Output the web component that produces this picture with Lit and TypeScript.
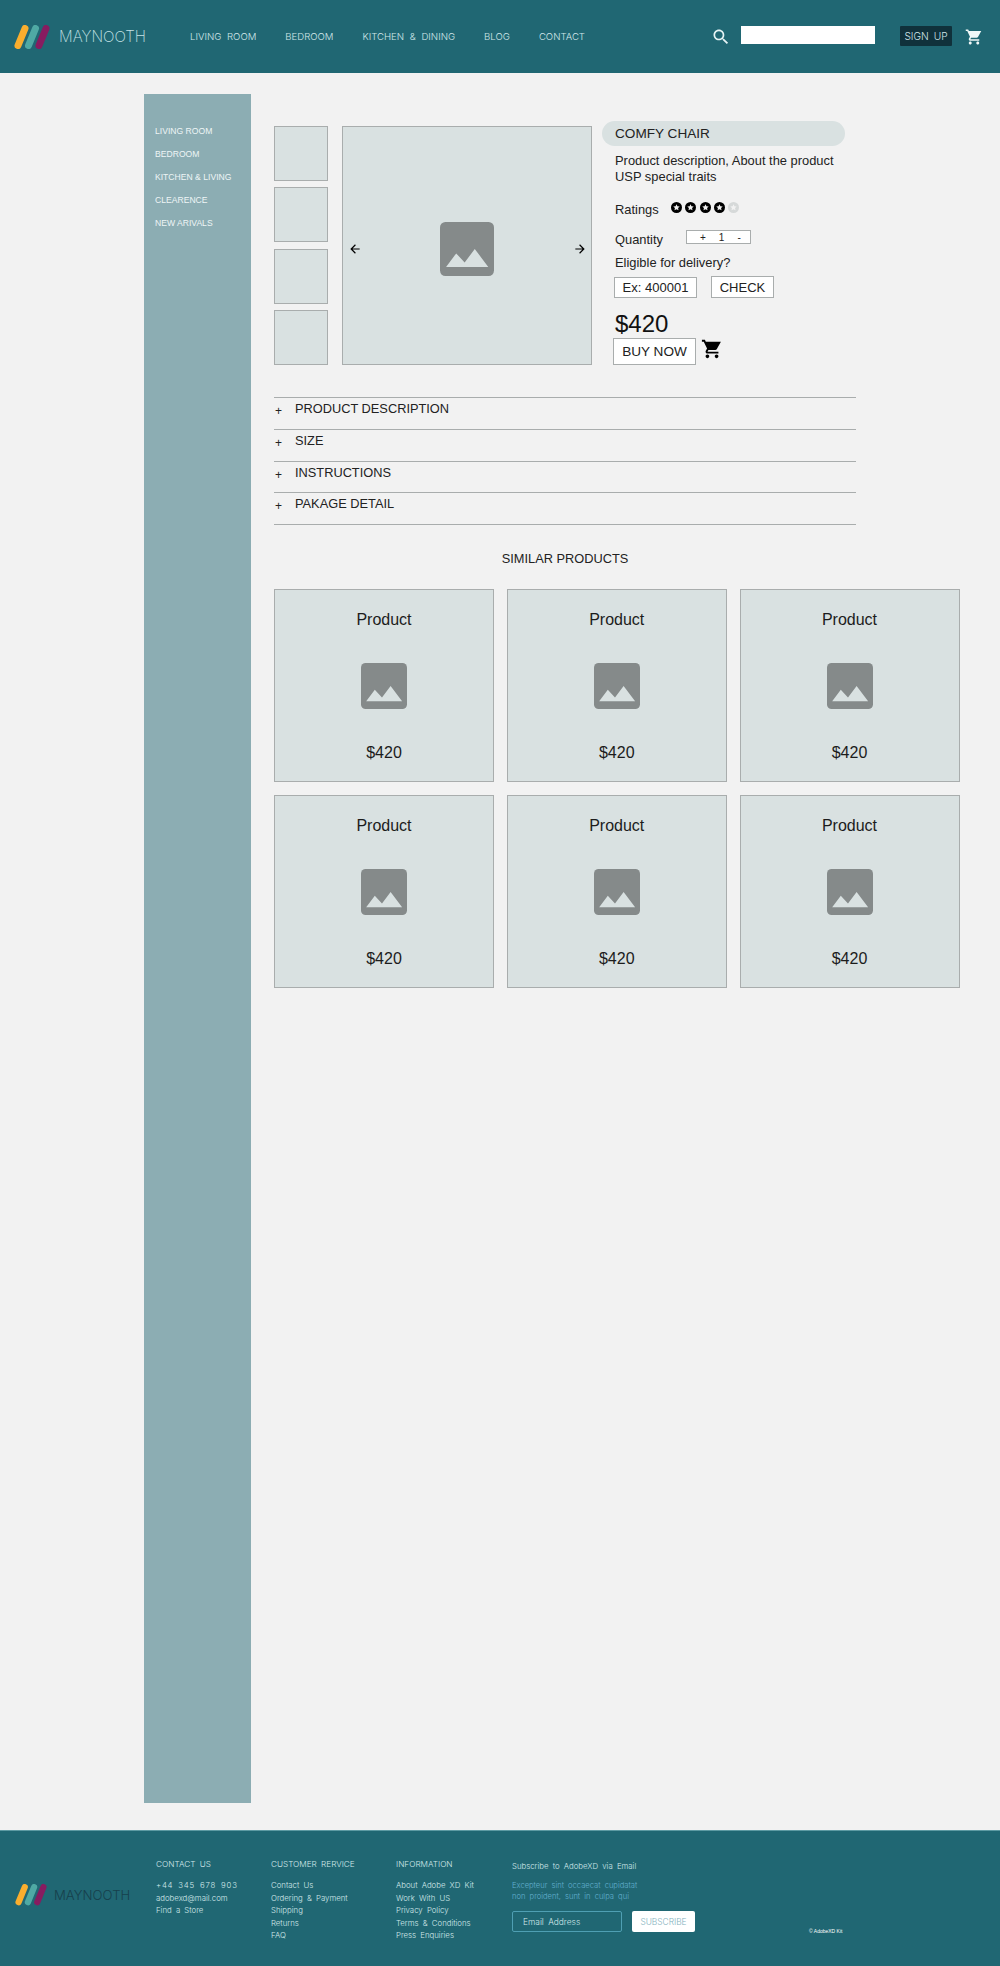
import { LitElement, html, css, svg } from "lit";
import { customElement } from "lit/decorators.js";

const CART = "M7 18c-1.1 0-1.99.9-1.99 2S5.9 22 7 22s2-.9 2-2-.9-2-2-2zM1 2v2h2l3.6 7.59-1.35 2.45c-.16.28-.25.61-.25.96 0 1.1.9 2 2 2h12v-2H7.42c-.14 0-.25-.11-.25-.25l.03-.12.9-1.63h7.45c.75 0 1.41-.41 1.75-1.03L21.7 4H5.21l-.94-2H1zm16 16c-1.1 0-1.99.9-1.99 2s.89 2 1.99 2 2-.9 2-2-.9-2-2-2z";
const SEARCH = "M15.5 14h-.79l-.28-.27C15.41 12.59 16 11.11 16 9.5 16 5.91 13.09 3 9.5 3S3 5.91 3 9.5 5.91 16 9.5 16c1.61 0 3.09-.59 4.23-1.57l.27.28v.79l5 4.99L20.49 19l-4.99-5zm-6 0C7.01 14 5 11.99 5 9.5S7.01 5 9.5 5 14 7.01 14 9.5 11.99 14 9.5 14z";

const logo = (w: number) => html`<svg class="logo-mark" width=${w} height=${(w * 24) / 36} viewBox="0 0 36 24">
  <g fill="none" stroke-width="7" stroke-linecap="round">
    <line x1="4" y1="20.5" x2="11" y2="3.5" stroke="#f9ae2e" />
    <line x1="14.5" y1="20.5" x2="21.5" y2="3.5" stroke="#4fa9a4" />
    <line x1="25" y1="20.5" x2="32" y2="3.5" stroke="#871c60" />
  </g>
</svg>`;

const imgIcon = (s: number) => html`<svg width=${s} height=${s} viewBox="0 0 160 160">
  <rect width="160" height="160" rx="16" fill="#858a8a" />
  <path d="M18 133 48 93 73 120 103 80 143 133Z" fill="#d9e1e1" />
</svg>`;

const icon = (d: string, s: number, color: string) =>
  html`<svg width=${s} height=${s} viewBox="0 0 24 24" fill=${color}>${svg`<path d=${d} />`}</svg>`;

const star = (color: string) => html`<svg width="11" height="11" viewBox="0 0 22 22">
  <circle cx="11" cy="11" r="11" fill=${color} />
  <path d="M11 4.6l1.9 4.1 4.5.5-3.3 3 .9 4.4-4-2.2-4 2.2.9-4.4-3.3-3 4.5-.5z" fill="#f2f2f2" />
</svg>`;

@customElement("app-root")
export class AppRoot extends LitElement {
  static styles = css`
    :host { display: block; font-family: "Liberation Sans", Arial, sans-serif; color: #1c1c1c; }
    .page { display: flex; flex-direction: column; height: 1966px; background: #f2f2f2; }

    .top { height: 73px; flex: none; background: #206773; display: flex; align-items: center; }
    .brand { display: flex; align-items: center; margin-left: 14px; width: 176px; flex: none; }
    .brand span { font-family: Inter, sans-serif; font-weight: 200; font-size: 15.2px; color: #c6e3e6; margin-left: 9px; }
    .nav { display: flex; gap: 29px; font-family: Inter, sans-serif; font-weight: 300; font-size: 9.6px; color: #d3e8ea; word-spacing: 3px; width: 521px; flex: none; }
    .nav a { white-space: nowrap; }
    .tools { display: flex; align-items: center; }
    .search-field { width: 134px; height: 18px; background: #fff; margin-left: 10px; margin-top: -3px; }
    .signup { width: 52px; height: 20px; margin-left: 25px; background: #10313b; border-radius: 1px; color: #cfe3e6; font-family: Inter, sans-serif; font-weight: 300; font-size: 10.2px; display: flex; align-items: center; justify-content: center; word-spacing: 2px; margin-top: -2px; }
    .top-cart { margin-left: 13px; display: flex; }

    .body { flex: 1; display: flex; padding: 21px 0 27px 144px; min-height: 0; }
    .side { width: 107px; flex: none; background: #8cadb3; padding: 30px 0 0 11px; box-sizing: border-box; display: flex; flex-direction: column; gap: 9px; color: #eef5f6; font-size: 8.6px; line-height: 14px; }
    .content { margin-left: 23px; padding-top: 32px; flex: none; width: 686px; }

    .product { display: flex; align-items: flex-start; }
    .thumbs { display: flex; flex-direction: column; gap: 6.33px; }
    .thumb { width: 54px; height: 55px; box-sizing: border-box; background: #d9e1e1; border: 1px solid #a9adad; }
    .hero { width: 250px; height: 239px; box-sizing: border-box; margin-left: 14px; background: #d9e1e1; border: 1px solid #a9adad; display: flex; align-items: center; justify-content: space-between; padding: 7px 4px 0 5px; color: #000; }
    .hero svg { display: block; }
    .hero .pic { margin-left: -1px; display: flex; }

    .info { margin-left: 10px; width: 250px; margin-top: -5px; }
    .pill { width: 243px; height: 25px; box-sizing: border-box; background: #d9e1e1; border-radius: 13px; padding-left: 13px; display: flex; align-items: center; font-size: 13.6px; color: #222; }
    .details { padding-left: 13px; }
    .desc { font-size: 12.9px; line-height: 16px; margin-top: 7px; color: #222; }
    .row { display: flex; align-items: center; font-size: 12.9px; color: #222; }
    .ratings { margin-top: 16px; height: 16px; }
    .stars { display: flex; gap: 3.4px; margin-left: 12px; margin-top: -4px; }
    .stars svg { display: block; }
    .qty { margin-top: 14px; height: 16px; }
    .qty-box { margin-left: 23px; margin-top: -4px; width: 65px; height: 14px; box-sizing: border-box; background: #fff; border: 1px solid #a9adad; display: flex; font-size: 10px; align-items: center; padding-left: 13px; gap: 13px; }
    .elig { font-size: 12.9px; margin-top: 8px; color: #222; line-height: 16px; }
    .check { display: flex; margin-top: 5px; margin-left: -1px; gap: 14px; align-items: flex-start; }
    .box { background: #fff; border: 1px solid #a9adad; box-sizing: border-box; display: flex; align-items: center; justify-content: center; font-size: 13px; color: #222; }
    .ex { width: 83px; height: 21px; margin-top: 1px; }
    .chk { width: 63px; height: 22px; }
    .price { font-size: 24px; line-height: 29px; margin-top: 11px; color: #111; }
    .buy-row { display: flex; align-items: flex-start; margin-left: -2px; }
    .buy { width: 83px; height: 27px; font-size: 13.6px; }
    .buy-row svg { margin-left: 5px; }

    .acc { width: 582px; margin-top: 32px; border-top: 1px solid #a9adad; }
    .acc-item { height: 31.75px; box-sizing: border-box; border-bottom: 1px solid #a9adad; display: flex; font-size: 12.8px; color: #222; }
    .plus { width: 21px; font-size: 12px; padding-top: 6px; padding-left: 1px; box-sizing: border-box; }
    .t { padding-top: 3px; line-height: 15px; }

    .similar { text-align: center; width: 582px; font-size: 12.8px; color: #222; margin-top: 25.5px; line-height: 15px; }
    .grid { display: grid; grid-template-columns: repeat(3, 220px); gap: 12.75px; margin-top: 23.5px; width: 686px; }
    .card { height: 193px; box-sizing: border-box; background: #d9e1e1; border: 1px solid #a9adad; display: flex; flex-direction: column; align-items: center; }
    .card .name { font-size: 16px; line-height: 20px; margin-top: 20px; color: #1c1c1c; }
    .card svg { display: block; margin-top: 33px; }
    .card .cost { font-size: 16px; line-height: 20px; margin-top: 34px; color: #1c1c1c; }

    .foot { height: 135px; flex: none; background: #206773; border-top: 1px solid #5d9aa3; display: flex; font-family: Inter, sans-serif; font-weight: 300; font-size: 7.8px; color: #d3e8ea; word-spacing: 2px; }
    .f-brand { display: flex; align-items: center; margin-left: 15px; margin-top: 52px; width: 141px; flex: none; height: 24px; }
    .f-brand span { color: #17404c; font-size: 13.2px; font-weight: 300; margin-left: 7px; word-spacing: 0; }
    .f-col { flex: none; padding-top: 27px; }
    .f-col h4 { margin: 0 0 9px; font-weight: 300; font-size: 8.2px; line-height: 12px; }
    .f-col div { line-height: 12.5px; white-space: nowrap; }
    .c1 { width: 115px; }
    .c2 { width: 125px; }
    .c3 { width: 116px; }
    .c1 .ph { letter-spacing: 0.8px; }
    .sub { width: 297px; flex: none; padding-top: 29px; position: relative; }
    .sub-t { line-height: 12px; font-size: 7.8px; }
    .sub-p { color: #63b0cf; margin-top: 9px; line-height: 10.5px; font-size: 7.6px; width: 130px; }
    .sub-f { display: flex; gap: 10px; margin-top: 9px; }
    .email { width: 110px; height: 21px; box-sizing: border-box; border: 1px solid #4f9fb3; border-radius: 2px; padding-left: 10px; display: flex; align-items: center; font-size: 8.4px; }
    .btn { width: 63px; height: 21px; background: #fff; border-radius: 2px; color: #7fb0bd; display: flex; align-items: center; justify-content: center; font-size: 8.4px; word-spacing: 0; }
    .copy { position: absolute; left: 297px; top: 97px; font-size: 5px; color: #fff; white-space: nowrap; word-spacing: 0; font-family: "Liberation Sans", sans-serif; font-weight: 400; }
  `;

  render() {
    const accordion = ["PRODUCT DESCRIPTION", "SIZE", "INSTRUCTIONS", "PAKAGE DETAIL"];
    const cards = [1, 2, 3, 4, 5, 6];
    return html`<div class="page">
      <header class="top">
        <div class="brand">${logo(36)}<span>MAYNOOTH</span></div>
        <nav class="nav">
          <a>LIVING ROOM</a><a>BEDROOM</a><a>KITCHEN &amp; DINING</a><a>BLOG</a><a>CONTACT</a>
        </nav>
        <div class="tools">
          ${icon(SEARCH, 20, "#e6f4f5")}
          <div class="search-field"></div>
          <div class="signup">SIGN UP</div>
          <div class="top-cart">${icon(CART, 18, "#f0f8f8")}</div>
        </div>
      </header>

      <main class="body">
        <aside class="side">
          <div>LIVING ROOM</div><div>BEDROOM</div><div>KITCHEN &amp; LIVING</div><div>CLEARENCE</div><div>NEW ARIVALS</div>
        </aside>
        <section class="content">
          <div class="product">
            <div class="thumbs">
              <div class="thumb"></div><div class="thumb"></div><div class="thumb"></div><div class="thumb"></div>
            </div>
            <div class="hero">
              ${icon("M20 11H7.83l5.59-5.59L12 4l-8 8 8 8 1.41-1.41L7.83 13H20v-2z", 14, "#000")}
              <div class="pic">${imgIcon(54)}</div>
              ${icon("M4 11h12.17l-5.59-5.59L12 4l8 8-8 8-1.41-1.41L16.17 13H4v-2z", 14, "#000")}
            </div>
            <div class="info">
              <div class="pill">COMFY CHAIR</div>
              <div class="details">
                <div class="desc">Product description, About the product<br />USP special traits</div>
                <div class="row ratings">Ratings
                  <div class="stars">${star("#000")}${star("#000")}${star("#000")}${star("#000")}${star("#d6d9d9")}</div>
                </div>
                <div class="row qty">Quantity
                  <div class="qty-box"><span>+</span><span>1</span><span>-</span></div>
                </div>
                <div class="elig">Eligible for delivery?</div>
                <div class="check"><div class="box ex">Ex: 400001</div><div class="box chk">CHECK</div></div>
                <div class="price">$420</div>
                <div class="buy-row"><div class="box buy">BUY NOW</div>${icon(CART, 22, "#000")}</div>
              </div>
            </div>
          </div>

          <div class="acc">
            ${accordion.map((a) => html`<div class="acc-item"><span class="plus">+</span><span class="t">${a}</span></div>`)}
          </div>
          <div class="similar">SIMILAR PRODUCTS</div>
          <div class="grid">
            ${cards.map(() => html`<div class="card"><div class="name">Product</div>${imgIcon(46)}<div class="cost">$420</div></div>`)}
          </div>
        </section>
      </main>

      <footer class="foot">
        <div class="f-brand">${logo(32)}<span>MAYNOOTH</span></div>
        <div class="f-col c1">
          <h4>CONTACT US</h4>
          <div class="ph">+44 345 678 903</div><div>adobexd@mail.com</div><div>Find a Store</div>
        </div>
        <div class="f-col c2">
          <h4>CUSTOMER RERVICE</h4>
          <div>Contact Us</div><div>Ordering &amp; Payment</div><div>Shipping</div><div>Returns</div><div>FAQ</div>
        </div>
        <div class="f-col c3">
          <h4>INFORMATION</h4>
          <div>About Adobe XD Kit</div><div>Work With US</div><div>Privacy Policy</div><div>Terms &amp; Conditions</div><div>Press Enquiries</div>
        </div>
        <div class="sub">
          <div class="sub-t">Subscribe to AdobeXD via Email</div>
          <div class="sub-p">Excepteur sint occaecat cupidatat non proident, sunt in culpa qui</div>
          <div class="sub-f"><div class="email">Email Address</div><div class="btn">SUBSCRIBE</div></div>
          <div class="copy">© AdobeXD Kit</div>
        </div>
      </footer>
    </div>`;
  }
}
